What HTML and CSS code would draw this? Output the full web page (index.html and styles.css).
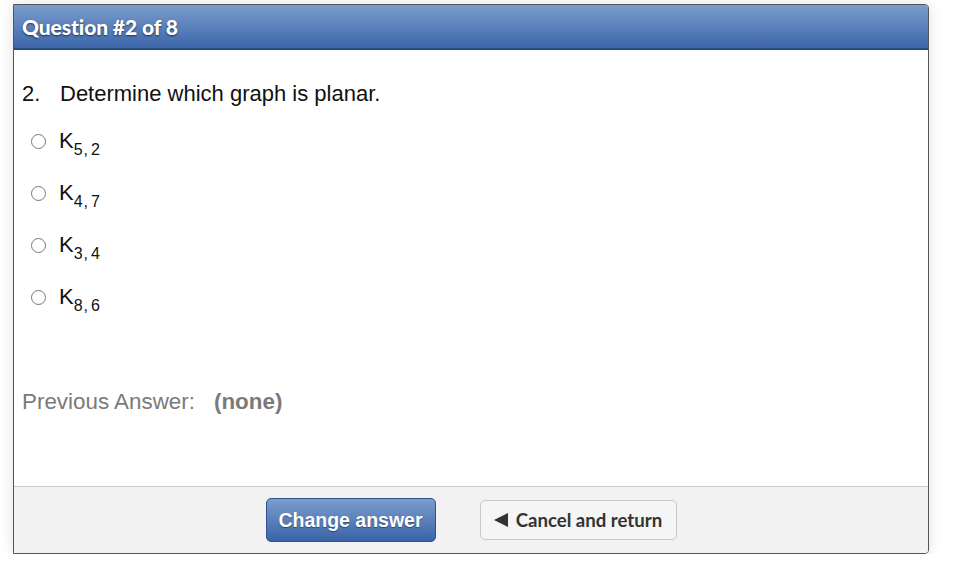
FILE: index.html
```html
<!DOCTYPE html>
<html lang="en">
<head>
    <meta charset="UTF-8">
    <title>Question #2 of 8</title>
    <link rel="stylesheet" href="styles.css">
</head>
<body>
    <div class="dialog">
        <!-- Header -->
        <div class="dialog-header">
            <h1>Question #2 of 8</h1>
        </div>

        <!-- Question -->
        <div class="dialog-body">
            <div class="question">
                <span class="q-num">2.</span>
                <span>Determine which graph is planar.</span>
            </div>
            <ul class="choices">
                <li><span class="radio"></span><span class="math">K<sub>5<i>,</i>2</sub></span></li>
                <li><span class="radio"></span><span class="math">K<sub>4<i>,</i>7</sub></span></li>
                <li><span class="radio"></span><span class="math">K<sub>3<i>,</i>4</sub></span></li>
                <li><span class="radio"></span><span class="math">K<sub>8<i>,</i>6</sub></span></li>
            </ul>
            <div class="previous">
                <span class="label">Previous Answer:</span><b>(none)</b>
            </div>
        </div>

        <!-- Buttons -->
        <div class="dialog-footer">
            <button class="btn btn-primary">Change answer</button>
            <button class="btn btn-plain"><span class="arrow"></span>Cancel and return</button>
        </div>
    </div>
</body>
</html>
```

FILE: styles.css
```css
body {
    margin: 0;
    background: #fff;
    font-family: Arial, "Liberation Sans", sans-serif;
}

.dialog {
    width: 914px;
    height: 548px;
    margin: 4px 0 0 13px;
    border: 1px solid #555;
    border-radius: 0 4px 4px 0;
    box-shadow: 0 0 14px rgba(0,0,0,0.12);
    display: flex;
    flex-direction: column;
    overflow: hidden;
}

.dialog-header {
    height: 43px;
    background: linear-gradient(#7b9dcd, #3c66aa);
    border-bottom: 2px solid #264a86;
    display: flex;
    align-items: center;
    padding-left: 8px;
}

.dialog-header h1 {
    margin: 0;
    color: #fff;
    font-family: Lato, "Open Sans", sans-serif;
    font-size: 21px;
    font-weight: 900;
    letter-spacing: -0.1px;
    text-shadow: 0 1px 2px rgba(0,0,0,0.6);
}

.dialog-body {
    flex: 1;
    padding: 31px 0 0 8px;
    color: #111;
}

.question {
    font-size: 22px;
    display: flex;
}

.q-num {
    width: 38px;
}

.choices {
    list-style: none;
    margin: 8px 0 0;
    padding: 0 0 0 9px;
}

.choices li {
    display: flex;
    align-items: center;
    height: 52px;
    font-size: 22px;
}

.math {
    position: relative;
    top: 0;
}

.choices sub {
    font-size: 16px;
    vertical-align: baseline;
    position: relative;
    top: 7px;
}

.choices sub i {
    font-style: normal;
    margin: 0 3px 0 1px;
}

.radio {
    width: 15px;
    height: 15px;
    border: 1px solid #777;
    border-radius: 50%;
    margin-right: 13px;
    box-sizing: border-box;
}

.previous {
    margin-top: 66px;
    font-size: 22.4px;
    color: #7a7a7a;
}

.previous .label {
    margin-right: 19px;
}

.dialog-footer {
    height: 66px;
    background: #f2f2f2;
    border-top: 1px solid #ccc;
    display: flex;
    align-items: center;
    justify-content: center;
    gap: 44px;
}

.btn {
    border-radius: 5px;
    font-weight: bold;
    cursor: pointer;
    display: flex;
    align-items: center;
    justify-content: center;
}

.btn-primary {
    width: 170px;
    height: 44px;
    background: linear-gradient(#7b9dcd, #3a64a8);
    border: 1px solid #2b5293;
    color: #fff;
    font-family: Arial, "Liberation Sans", sans-serif;
    font-size: 19.5px;
    text-shadow: 0 1px 1px rgba(0,0,0,0.4);
}

.btn-plain {
    width: 197px;
    height: 40px;
    background: #f5f5f5;
    border: 1px solid #c8c8c8;
    color: #333;
    font-family: Lato, "Open Sans", sans-serif;
    font-size: 18.6px;
}

.arrow {
    width: 0;
    height: 0;
    border-top: 7px solid transparent;
    border-bottom: 7px solid transparent;
    border-right: 14px solid #333;
    margin-right: 8px;
}
```
